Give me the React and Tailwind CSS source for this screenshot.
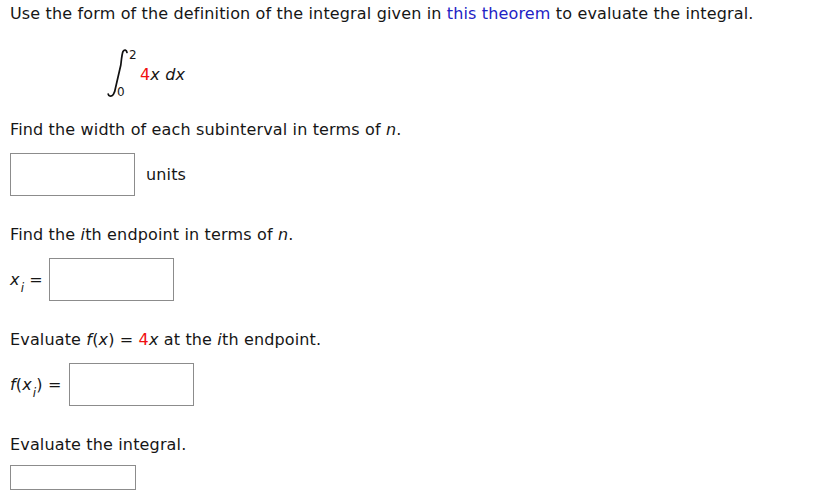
import React from "react";

const Box = ({ className = "" }) => (
  <div className={`border border-[#8c8c8c] bg-white ${className}`} />
);

const Sub = ({ children }) => (
  <span className="relative top-[7px] ml-[1px] text-[12px] italic">{children}</span>
);

const App = () => {
  return (
    <div className="min-h-[504px] w-[835px] bg-white px-[10px] pt-[4px] text-[16px] leading-[20px] tracking-[0.15px] text-[#161616] [font-family:'DejaVu_Sans',Verdana,sans-serif]">
      <p>
        Use the form of the definition of the integral given in{" "}
        <span className="text-[#2222c4]">this theorem</span> to evaluate the
        integral.
      </p>

      {/* integral */}
      <div className="relative ml-[96px] mt-[24px] h-[50px] w-[90px]">
        <svg
          className="absolute left-0 top-0"
          width="26"
          height="50"
          viewBox="0 0 26 50"
          fill="none"
        >
          <path
            d="M21 4.5 C20.5 1.8 18.3 1.2 17 3.5 C16 5.5 15.5 11 14.8 17 L9.5 40 C8.6 46 6.5 48.5 3.8 48 C3 47.8 2.4 47 2.2 46"
            stroke="#111"
            strokeWidth="1.7"
            strokeLinecap="round"
          />
        </svg>
        <span className="absolute left-[23px] top-[1px] text-[12px] leading-[12px]">2</span>
        <span className="absolute left-[11px] top-[38px] text-[12px] leading-[12px]">0</span>
        <span className="absolute left-[34px] top-[17px] whitespace-nowrap">
          <span className="text-[#f01010]">4</span>
          <i>x</i> <i>dx</i>
        </span>
      </div>

      <p className="mt-[22px]">
        Find the width of each subinterval in terms of <i>n</i>.
      </p>
      <div className="mt-[13px] flex items-center gap-[11px]">
        <Box className="h-[43px] w-[125px]" />
        <span>units</span>
      </div>

      <p className="mt-[29px]">
        Find the <i>i</i>th endpoint in terms of <i>n</i>.
      </p>
      <div className="mt-[13px] flex items-center gap-[6px]">
        <span className="mt-[2px] whitespace-nowrap">
          <i>x</i>
          <Sub>i</Sub> =
        </span>
        <Box className="h-[43px] w-[125px]" />
      </div>

      <p className="mt-[29px]">
        Evaluate <i>f</i>(<i>x</i>) = <span className="text-[#f01010]">4</span>
        <i>x</i> at the <i>i</i>th endpoint.
      </p>
      <div className="mt-[13px] flex items-center gap-[7px]">
        <span className="mt-[2px] whitespace-nowrap">
          <i>f</i>(<i>x</i>
          <Sub>i</Sub>) =
        </span>
        <Box className="h-[43px] w-[125px]" />
      </div>

      <p className="mt-[29px]">Evaluate the integral.</p>
      <div className="mt-[10px]">
        <Box className="h-[25px] w-[126px]" />
      </div>
    </div>
  );
};

export default App;
